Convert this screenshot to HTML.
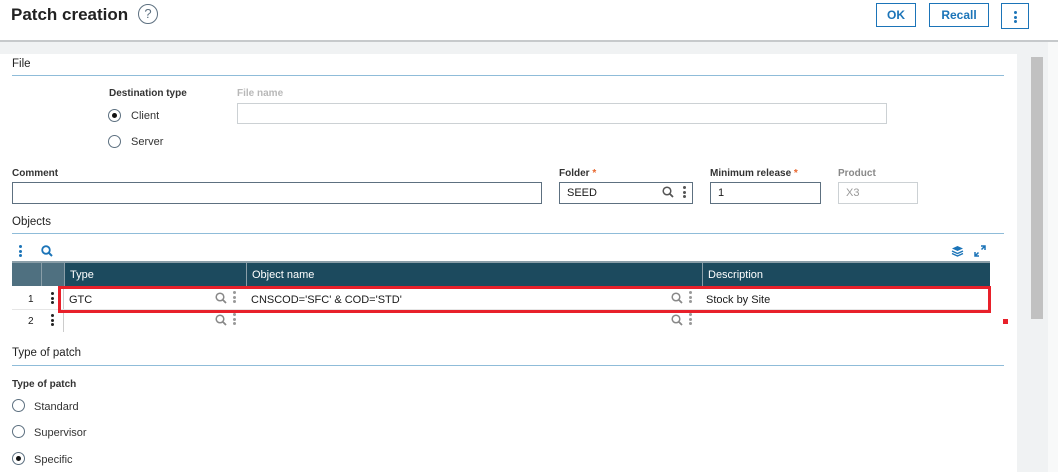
<!DOCTYPE html>
<html><head><meta charset="utf-8"><style>
*{box-sizing:border-box;margin:0;padding:0}
body{width:1058px;height:472px;overflow:hidden;background:#fff;font-family:"Liberation Sans",sans-serif;color:#1a1a1a;position:relative}
.a{position:absolute}
.lbl{font-size:10px;font-weight:bold;color:#333}
.sec{font-size:11.5px;color:#222}
.line{height:1px;background:#8fbcd9}
.btn{border:1.5px solid #1b74b8;color:#1b74b8;font-weight:bold;font-size:12px;text-align:center;line-height:23px;background:#fff}
.inp{border:1px solid #5d7080;background:#fff;font-size:11px;padding-left:7px;line-height:21px}
.radio{width:13px;height:13px;border:1px solid #5d7080;border-radius:50%}
.radio.on::after{content:"";position:absolute;left:3px;top:3px;width:5px;height:5px;border-radius:50%;background:#111}
.rt{font-size:11px;color:#333}
.th{color:#fff;font-size:11px;line-height:24px;padding-left:5px;border-left:1px solid #8a9ea8}
.td{font-size:11px;line-height:22px}
.dots{width:3px}
.dots i{display:block;width:3px;height:3px;background:#222;border-radius:50%;margin-bottom:1.5px}
.gd i{background:#999}
</style></head><body>
<div class="a" style="left:11px;top:5px;font-size:17px;font-weight:bold;color:#222">Patch creation</div>
<div class="a" style="left:138px;top:4px;width:20px;height:20px;border:1.3px solid #5d7080;border-radius:50%;font-size:13px;color:#5d7080;text-align:center;line-height:18px">?</div>
<div class="a btn" style="left:876px;top:3px;width:40px;height:24px">OK</div>
<div class="a btn" style="left:929px;top:3px;width:60px;height:24px">Recall</div>
<div class="a btn" style="left:1001px;top:3px;width:28px;height:26px"><div class="dots" style="margin:7px auto 0"><i style="background:#1b74b8"></i><i style="background:#1b74b8"></i><i style="background:#1b74b8"></i></div></div>
<div class="a" style="left:0;top:40px;width:1058px;height:2px;background:#c6c9cb"></div>
<div class="a" style="left:0;top:42px;width:1058px;height:12px;background:#f0f2f3"></div>
<div class="a" style="left:1017px;top:42px;width:31px;height:430px;background:#f0f2f3"></div>
<div class="a" style="left:1031px;top:57px;width:12px;height:262px;background:#c1c1c1"></div>
<div class="a" style="left:1048px;top:42px;width:10px;height:430px;background:#f8f9f9"></div>

<div class="a sec" style="left:12px;top:58px">File</div>
<div class="a line" style="left:12px;top:75px;width:992px"></div>
<div class="a lbl" style="left:109px;top:88px">Destination type</div>
<div class="a lbl" style="left:237px;top:88px;color:#b8b8b8">File name</div>
<div class="a inp" style="left:237px;top:103px;width:650px;height:21px;border-color:#ccd1d4"></div>
<div class="a radio on" style="left:108px;top:109px"></div><div class="a rt" style="left:131px;top:110px">Client</div>
<div class="a radio" style="left:108px;top:135px"></div><div class="a rt" style="left:131px;top:136px">Server</div>

<div class="a lbl" style="left:12px;top:168px">Comment</div>
<div class="a inp" style="left:12px;top:182px;width:530px;height:22px"></div>
<div class="a lbl" style="left:559px;top:168px">Folder <span style="color:#e8662d">*</span></div>
<div class="a inp" style="left:559px;top:182px;width:134px;height:22px">SEED</div>
<svg class="a" style="left:662px;top:186px" width="12" height="12" viewBox="0 0 12 12"><circle cx="5" cy="5" r="3.8" fill="none" stroke="#555" stroke-width="1.5"/><path d="M8 8l3 3" stroke="#555" stroke-width="1.8"/></svg>
<div class="a dots" style="left:683px;top:186px"><i style="background:#555"></i><i style="background:#555"></i><i style="background:#555"></i></div>
<div class="a lbl" style="left:710px;top:168px">Minimum release <span style="color:#e8662d">*</span></div>
<div class="a inp" style="left:710px;top:182px;width:111px;height:22px">1</div>
<div class="a lbl" style="left:838px;top:168px;color:#888">Product</div>
<div class="a inp" style="left:838px;top:182px;width:80px;height:22px;border-color:#ccd1d4;color:#999">X3</div>

<div class="a sec" style="left:12px;top:216px">Objects</div>
<div class="a line" style="left:12px;top:233px;width:992px"></div>
<div class="a dots" style="left:19px;top:245px"><i style="background:#1b74b8"></i><i style="background:#1b74b8"></i><i style="background:#1b74b8"></i></div>
<svg class="a" style="left:41px;top:245px" width="12" height="12" viewBox="0 0 12 12"><circle cx="5" cy="5" r="3.8" fill="none" stroke="#1b74b8" stroke-width="1.8"/><path d="M8 8l3 3" stroke="#1b74b8" stroke-width="2"/></svg>
<svg class="a" style="left:951px;top:245px" width="13" height="12" viewBox="0 0 13 12"><path d="M6.5 1L12 3.5 6.5 6 1 3.5z" fill="#1b74b8"/><path d="M1 6l5.5 2.5L12 6M1 8.5l5.5 2.5L12 8.5" fill="none" stroke="#1b74b8" stroke-width="1.4"/></svg>
<svg class="a" style="left:974px;top:245px" width="12" height="12" viewBox="0 0 12 12"><path d="M7 1h4v4M11 1L7.5 4.5M1 7v4h4M1 11l3.5-3.5" fill="none" stroke="#1b74b8" stroke-width="1.5"/></svg>

<div class="a" style="left:12px;top:261px;width:978px;height:25px;background:#1c4a5e;border-top:2px solid #8a9ea8"></div>
<div class="a" style="left:12px;top:261px;width:29px;height:25px;background:#4f7080;border-top:2px solid #8a9ea8"></div>
<div class="a" style="left:41px;top:261px;width:23px;height:25px;background:#4f7080;border-top:2px solid #8a9ea8;border-left:1px solid #8a9ea8"></div>
<div class="a th" style="left:64px;top:263px;width:182px">Type</div>
<div class="a th" style="left:246px;top:263px;width:456px">Object name</div>
<div class="a th" style="left:702px;top:263px;width:288px">Description</div>
<div class="a" style="left:63px;top:286px;width:1px;height:46px;background:#ccc"></div>
<div class="a" style="left:12px;top:309px;width:978px;height:1px;background:#e6e6e6"></div>
<div class="a td" style="left:28px;top:289px;font-size:10px">1</div>
<div class="a td" style="left:28px;top:311px;font-size:10px">2</div>
<div class="a dots" style="left:51px;top:292px"><i></i><i></i><i></i></div>
<div class="a dots" style="left:51px;top:314px"><i></i><i></i><i></i></div>
<div class="a td" style="left:69px;top:289px">GTC</div>
<div class="a td" style="left:251px;top:289px">CNSCOD='SFC' &amp; COD='STD'</div>
<div class="a td" style="left:706px;top:289px">Stock by Site</div>
<svg class="a" style="left:215px;top:292px" width="12" height="12" viewBox="0 0 12 12"><circle cx="5" cy="5" r="3.8" fill="none" stroke="#888" stroke-width="1.5"/><path d="M8 8l3 3" stroke="#888" stroke-width="1.8"/></svg>
<div class="a dots gd" style="left:233px;top:291px"><i></i><i></i><i></i></div>
<svg class="a" style="left:215px;top:314px" width="12" height="12" viewBox="0 0 12 12"><circle cx="5" cy="5" r="3.8" fill="none" stroke="#888" stroke-width="1.5"/><path d="M8 8l3 3" stroke="#888" stroke-width="1.8"/></svg>
<div class="a dots gd" style="left:233px;top:313px"><i></i><i></i><i></i></div>
<svg class="a" style="left:671px;top:292px" width="12" height="12" viewBox="0 0 12 12"><circle cx="5" cy="5" r="3.8" fill="none" stroke="#888" stroke-width="1.5"/><path d="M8 8l3 3" stroke="#888" stroke-width="1.8"/></svg>
<div class="a dots gd" style="left:689px;top:291px"><i></i><i></i><i></i></div>
<svg class="a" style="left:671px;top:314px" width="12" height="12" viewBox="0 0 12 12"><circle cx="5" cy="5" r="3.8" fill="none" stroke="#888" stroke-width="1.5"/><path d="M8 8l3 3" stroke="#888" stroke-width="1.8"/></svg>
<div class="a dots gd" style="left:689px;top:313px"><i></i><i></i><i></i></div>
<div class="a" style="left:58px;top:286px;width:933px;height:27px;border:3px solid #e8202a"></div>
<div class="a" style="left:1003px;top:319px;width:5px;height:5px;background:#e8202a"></div>

<div class="a sec" style="left:12px;top:347px">Type of patch</div>
<div class="a line" style="left:12px;top:365px;width:992px"></div>
<div class="a lbl" style="left:12px;top:379px">Type of patch</div>
<div class="a radio" style="left:12px;top:399px"></div><div class="a rt" style="left:34px;top:401px">Standard</div>
<div class="a radio" style="left:12px;top:425px"></div><div class="a rt" style="left:34px;top:427px">Supervisor</div>
<div class="a radio on" style="left:12px;top:452px"></div><div class="a rt" style="left:34px;top:454px">Specific</div>
</body></html>
